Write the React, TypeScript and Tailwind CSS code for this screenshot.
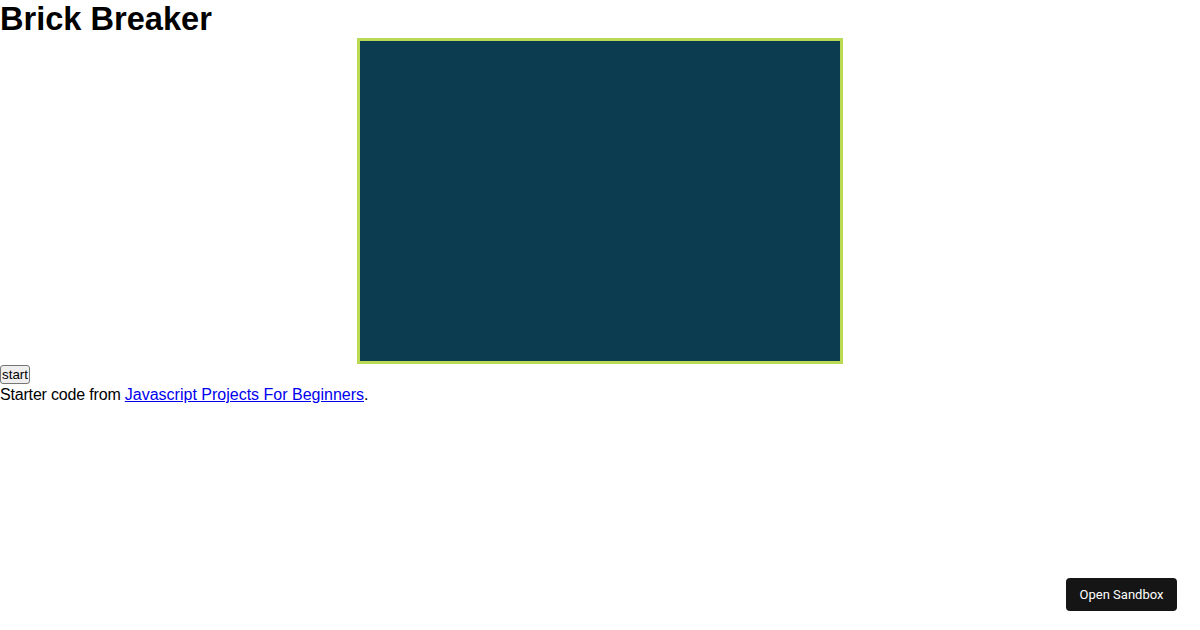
export default function App() {
  return (
    <div className="font-['Liberation_Sans',Arial,sans-serif] text-base text-black">
      <h1 className="text-[32.6px] font-bold leading-[37px]">Brick Breaker</h1>
      <div className="mx-auto mt-px h-[326px] w-[486px] border-[3px] border-[#bada55] bg-[#0b3c50]" />
      <div className="pt-[1px] leading-none">
        <button className="h-[19px] w-[30px] rounded-[3px] border border-[#767676] bg-[#efefef] text-[13.33px] leading-[15px]">
          start
        </button>
      </div>
      <div className="pt-[2px] leading-[18px]">
        <span className="tracking-[-0.18px]">Starter code from </span>
        <a href="#" className="text-[#0000ee] underline">
          Javascript Projects For Beginners
        </a>
        .
      </div>
      <button className="fixed bottom-[19px] right-[23px] flex h-[33px] w-[111px] items-center justify-center rounded-[4px] bg-[#151515] font-['Roboto',sans-serif] text-[13px] text-white">
        Open Sandbox
      </button>
    </div>
  );
}
